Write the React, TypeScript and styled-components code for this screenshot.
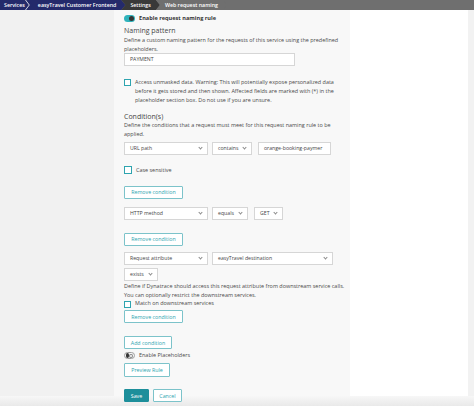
import React from 'react'
import styled, { createGlobalStyle } from 'styled-components'

const Global = createGlobalStyle`
  html, body { margin: 0; padding: 0; background: #fff; }
  body { font-family: "Open Sans", "Liberation Sans", sans-serif; color: #454646; }
`

const teal = '#2ea4af'
const tealBorder = '#7cc3ca'

const Page = styled.div`
  width: 474px;
  height: 406px;
  display: flex;
  flex-direction: column;
  overflow: hidden;
  position: relative;
`

const Crumbs = styled.nav`
  height: 10px;
  display: flex;
  background: #6f6f6f;
  flex-shrink: 0;
`

const Crumb = styled.div<{ $bg: string; $first?: boolean }>`
  background: ${p => p.$bg};
  color: #fff;
  font-size: 5.3px;
  line-height: 10px;
  font-weight: 600;
  padding: 0 9px 0 ${p => (p.$first ? 4 : 9)}px;
  margin-right: -4px;
  clip-path: ${p =>
    p.$first
      ? 'polygon(0 0, calc(100% - 4px) 0, 100% 50%, calc(100% - 4px) 100%, 0 100%)'
      : 'polygon(0 0, calc(100% - 4px) 0, 100% 50%, calc(100% - 4px) 100%, 0 100%, 4px 50%)'};
  white-space: nowrap;
`

// thin white chevron drawn between two crumbs of the same colour
const Sep = styled.svg`
  width: 5px;
  height: 10px;
  margin: 0 -1px 0 -5px;
  position: relative;
  z-index: 1;
  flex-shrink: 0;
`

const Body = styled.div`
  flex: 1;
  display: grid;
  grid-template-columns: 114px 236px 118px 6px;
`

const Side = styled.div`
  background: #f1f1f1;
`

const Card = styled.main`
  background: #f8f8f8;
  padding: 4px 3px 0 10px;
  display: flex;
  flex-direction: column;
`

const Blank = styled.div`
  background: #fff;
`

const Edge = styled.div`
  background: #f2f2f2;
`

const Footer = styled.div`
  position: absolute;
  left: 0;
  right: 0;
  bottom: 0;
  height: 10px;
  background: linear-gradient(#f7f7f7, #e9e9e9);
  pointer-events: none;
`

const Row = styled.div<{ $mt?: number; $gap?: number }>`
  display: flex;
  align-items: center;
  gap: ${p => p.$gap ?? 4}px;
  margin-top: ${p => p.$mt ?? 0}px;
`

const Toggle = styled.span<{ $on?: boolean }>`
  width: 11px;
  height: 7px;
  border-radius: 4px;
  background: ${p => (p.$on ? '#2fb3bc' : '#f4f4f4')};
  border: ${p => (p.$on ? 'none' : '0.8px solid #a0a0a0')};
  box-sizing: border-box;
  display: flex;
  align-items: center;
  justify-content: ${p => (p.$on ? 'flex-end' : 'space-between')};
  padding: 0 1px;
  &::before {
    content: '';
    display: ${p => (p.$on ? 'none' : 'block')};
    width: 4.5px;
    height: 4.5px;
    border-radius: 50%;
    background: #353535;
  }
  &::after {
    content: '';
    width: ${p => (p.$on ? 5 : 2)}px;
    height: ${p => (p.$on ? 5 : 2)}px;
    border-radius: 50%;
    background: ${p => (p.$on ? '#353535' : 'transparent')};
    border: ${p => (p.$on ? 'none' : '0.6px solid #8a8a8a')};
  }
`

const Strong = styled.span`
  font-size: 5.6px;
  font-weight: 700;
  color: #353535;
`

const Heading = styled.h3<{ $mt: number }>`
  margin: ${p => p.$mt}px 0 0;
  font-size: 7px;
  font-weight: 400;
  line-height: 9px;
  color: #454646;
`

const Text = styled.p<{ $mt?: number }>`
  margin: ${p => p.$mt ?? 0}px 0 0;
  font-size: 5.45px;
  line-height: 9px;
  color: #4a4a4a;
`

const Input = styled.div<{ $w: number; $mt?: number; $ml?: number }>`
  width: ${p => p.$w}px;
  height: 13px;
  margin-top: ${p => p.$mt ?? 0}px;
  margin-left: ${p => p.$ml ?? 0}px;
  background: #fff;
  border: 0.8px solid #d6d6d6;
  box-sizing: border-box;
  font-size: 5.2px;
  line-height: 11px;
  padding-left: 5px;
  color: #454646;
  white-space: nowrap;
  overflow: hidden;
  flex-shrink: 0;
`

const Select = styled(Input)`
  display: flex;
  align-items: center;
  justify-content: space-between;
  padding-right: 5px;
  &::after {
    content: '';
    width: 2px;
    height: 2px;
    border-right: 0.7px solid #8a8a8a;
    border-bottom: 0.7px solid #8a8a8a;
    transform: translateY(-1px) rotate(45deg);
  }
`

const Box = styled.span<{ $size?: number }>`
  width: ${p => p.$size ?? 7}px;
  height: ${p => p.$size ?? 7}px;
  border: 0.9px solid ${teal};
  box-sizing: border-box;
  background: #fff;
  flex-shrink: 0;
`

const Check = styled.div<{ $mt: number; $tmt?: number }>`
  display: flex;
  gap: 4px;
  margin-top: ${p => p.$mt}px;
  align-items: flex-start;
  & > p {
    margin-top: ${p => p.$tmt ?? -1}px;
  }
`

const Button = styled.button<{ $w: number; $mt?: number; $h?: number; $primary?: boolean }>`
  width: ${p => p.$w}px;
  height: ${p => p.$h ?? 13}px;
  margin-top: ${p => p.$mt ?? 0}px;
  padding: 0;
  font-family: inherit;
  font-size: 5.3px;
  border: 0.8px solid ${p => (p.$primary ? '#1d8f9b' : tealBorder)};
  background: ${p => (p.$primary ? '#1d8f9b' : '#fff')};
  color: ${p => (p.$primary ? '#fff' : teal)};
  border-radius: 1px;
  box-sizing: border-box;
  position: relative;
  z-index: 1;
`

export default function App() {
  return (
    <Page>
      <Global />
      <Crumbs>
        <Crumb $bg="#242a6b" $first>Services</Crumb>
        <Sep viewBox="0 0 5 10">
          <polyline points="0.5,0 4.3,5 0.5,10" fill="none" stroke="#fff" strokeWidth="0.8" />
        </Sep>
        <Crumb $bg="#242a6b">easyTravel Customer Frontend</Crumb>
        <Crumb $bg="#393939">Settings</Crumb>
        <Crumb $bg="#6f6f6f">Web request naming</Crumb>
      </Crumbs>
      <Body>
        <Side />
        <Card>
          <Row $mt={0}>
            <Toggle $on />
            <Strong>Enable request naming rule</Strong>
          </Row>
          <Heading $mt={4}>Naming pattern</Heading>
          <Text $mt={1}>
            Define a custom naming pattern for the requests of this service using the predefined
            placeholders.
          </Text>
          <Input $w={171} $mt={-1}>PAYMENT</Input>

          <Check $mt={13}>
            <Box />
            <Text>
              Access unmasked data. Warning: This will potentially expose personalized data before it
              gets stored and then shown. Affected fields are marked with (*) in the placeholder
              section box. Do not use if you are unsure.
            </Text>
          </Check>

          <Heading $mt={7}>Condition(s)</Heading>
          <Text $mt={0}>
            Define the conditions that a request must meet for this request naming rule to be
            applied.
          </Text>
          <Row $mt={3}>
            <Select $w={84}>URL path</Select>
            <Select $w={40}>contains</Select>
            <Input $w={73} $ml={2}>orange-booking-paymer</Input>
          </Row>
          <Check $mt={11} $tmt={-0.5}>
            <Box $size={8} />
            <Text>Case sensitive</Text>
          </Check>
          <Button $w={59} $mt={11}>Remove condition</Button>

          <Row $mt={8}>
            <Select $w={84}>HTTP method</Select>
            <Select $w={36}>equals</Select>
            <Select $w={29} $ml={2}>GET</Select>
          </Row>
          <Button $w={59} $mt={13}>Remove condition</Button>

          <Row $mt={6}>
            <Select $w={84}>Request attribute</Select>
            <Select $w={121}>easyTravel destination</Select>
          </Row>
          <Select $w={34} $mt={3}>exists</Select>
          <Text $mt={1}>
            Define if Dynatrace should access this request attribute from downstream service calls. You
            can optionally restrict the downstream services.
          </Text>
          <Check $mt={1} $tmt={-1.5}>
            <Box />
            <Text>Match on downstream services</Text>
          </Check>
          <Button $w={59} $mt={2}>Remove condition</Button>

          <Button $w={48} $mt={13}>Add condition</Button>
          <Row $mt={2}>
            <Toggle />
            <Text>Enable Placeholders</Text>
          </Row>
          <Button $w={46} $h={14} $mt={3}>Preview Rule</Button>
          <Row $mt={12} $gap={4}>
            <Button $w={25} $primary>Save</Button>
            <Button $w={29}>Cancel</Button>
          </Row>
        </Card>
        <Blank />
        <Edge />
      </Body>
      <Footer />
    </Page>
  )
}
